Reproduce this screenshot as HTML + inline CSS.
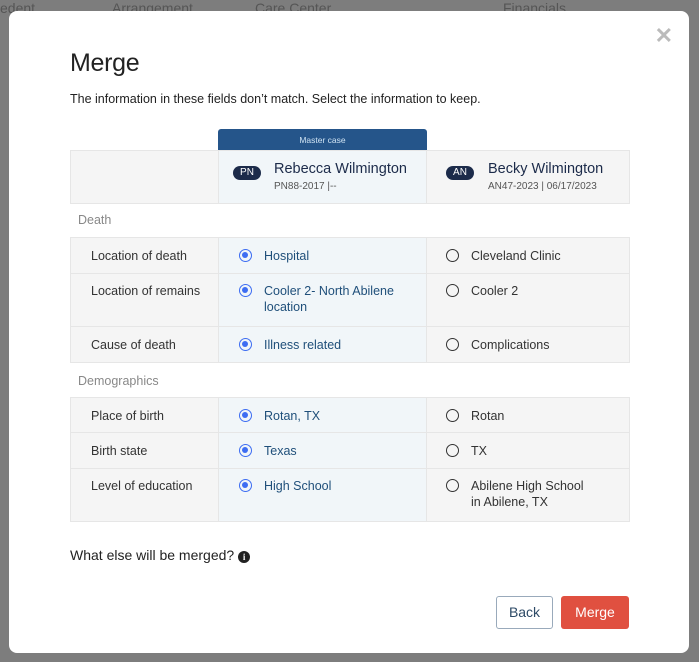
<!DOCTYPE html>
<html><head><style>
*{box-sizing:border-box}
body{margin:0;width:699px;height:662px;background:#7d7d7d;font-family:"Liberation Sans",sans-serif;position:relative;overflow:hidden;color:#333}
.bg{position:absolute;color:#555;font-size:14px}
.modal{position:absolute;left:9px;top:11px;width:680px;height:642px;background:#fff;border-radius:8px}
.a{position:absolute}
h1{position:absolute;left:61px;top:38px;margin:0;font-weight:normal;font-size:25px;color:#222;letter-spacing:-0.3px}
.row{position:absolute;left:61px;width:560px;background:#f5f5f5;border:1px solid #e6e6e6;border-top:none}
.row.f{border-top:1px solid #e6e6e6}
.c2{position:absolute;left:147px;width:209px;top:0;bottom:0;background:#f1f6f9;border-left:1px solid #e6e6e6;border-right:1px solid #e6e6e6}
.lbl{position:absolute;left:20px;font-size:12.5px;color:#333}
.opt{position:absolute;font-size:12.5px;line-height:16px}
.r{position:absolute;width:13px;height:13px;border:1.5px solid #333;border-radius:50%}
.r.on{border-color:#3d6df2}
.r.on:after{content:"";position:absolute;left:2px;top:2px;width:6px;height:6px;border-radius:50%;background:#3d6df2}
.sec{position:absolute;left:69px;font-size:12.5px;color:#888}
.pill{position:absolute;background:#1c2b4a;color:#fff;font-size:10px;border-radius:8px;width:28px;height:14px;line-height:14px;text-align:center}
</style></head><body>
<div class="bg" style="left:0;top:0">edent</div>
<div class="bg" style="left:112px;top:0">Arrangement</div>
<div class="bg" style="left:255px;top:0">Care Center</div>
<div class="bg" style="left:503px;top:0">Financials</div>
<div class="modal">
<div class="a" style="right:16px;top:12px;font-size:22px;color:#bbb;font-weight:bold">✕</div>
<h1>Merge</h1>
<div class="a" style="left:61px;top:81px;font-size:12.5px;color:#222">The information in these fields don’t match. Select the information to keep.</div>
<div class="a" style="left:209px;top:118px;width:209px;height:21px;background:#25558a;border-radius:3px 3px 0 0;color:#cfe3f3;font-size:8.5px;text-align:center;line-height:22px">Master case</div>
<div class="row f" style="top:139px;height:54px"><div class="c2"></div>
<div class="pill" style="left:162px;top:15px">PN</div>
<div class="a" style="left:203px;top:10px;font-size:14.5px;color:#1c2b4a">Rebecca Wilmington</div>
<div class="a" style="left:203px;top:30px;font-size:10px;color:#555">PN88-2017 |--</div>
<div class="pill" style="left:375px;top:15px">AN</div>
<div class="a" style="left:417px;top:10px;font-size:14.5px;color:#1c2b4a">Becky Wilmington</div>
<div class="a" style="left:417px;top:30px;font-size:10px;color:#555">AN47-2023 | 06/17/2023</div>
</div>
<div class="sec" style="top:202px">Death</div>
<div class="row f" style="top:226px;height:37px"><div class="c2"></div><div class="lbl" style="top:11px">Location of death</div>
<div class="r on" style="left:168px;top:11px"></div><div class="opt" style="left:193px;top:10px;color:#1f4f7a">Hospital</div>
<div class="r" style="left:375px;top:11px"></div><div class="opt" style="left:400px;top:10px">Cleveland Clinic</div></div>
<div class="row" style="top:263px;height:53px"><div class="c2"></div><div class="lbl" style="top:10px">Location of remains</div>
<div class="r on" style="left:168px;top:10px"></div><div class="opt" style="left:193px;top:9px;color:#1f4f7a">Cooler 2- North Abilene<br>location</div>
<div class="r" style="left:375px;top:10px"></div><div class="opt" style="left:400px;top:9px">Cooler 2</div></div>
<div class="row" style="top:316px;height:36px"><div class="c2"></div><div class="lbl" style="top:11px">Cause of death</div>
<div class="r on" style="left:168px;top:11px"></div><div class="opt" style="left:193px;top:10px;color:#1f4f7a">Illness related</div>
<div class="r" style="left:375px;top:11px"></div><div class="opt" style="left:400px;top:10px">Complications</div></div>
<div class="sec" style="top:363px">Demographics</div>
<div class="row f" style="top:386px;height:36px"><div class="c2"></div><div class="lbl" style="top:11px">Place of birth</div>
<div class="r on" style="left:168px;top:11px"></div><div class="opt" style="left:193px;top:10px;color:#1f4f7a">Rotan, TX</div>
<div class="r" style="left:375px;top:11px"></div><div class="opt" style="left:400px;top:10px">Rotan</div></div>
<div class="row" style="top:422px;height:36px"><div class="c2"></div><div class="lbl" style="top:11px">Birth state</div>
<div class="r on" style="left:168px;top:11px"></div><div class="opt" style="left:193px;top:10px;color:#1f4f7a">Texas</div>
<div class="r" style="left:375px;top:11px"></div><div class="opt" style="left:400px;top:10px">TX</div></div>
<div class="row" style="top:458px;height:53px"><div class="c2"></div><div class="lbl" style="top:10px">Level of education</div>
<div class="r on" style="left:168px;top:10px"></div><div class="opt" style="left:193px;top:9px;color:#1f4f7a">High School</div>
<div class="r" style="left:375px;top:10px"></div><div class="opt" style="left:400px;top:9px">Abilene High School<br>in Abilene, TX</div></div>
<div class="a" style="left:61px;top:536px;font-size:14px;color:#222">What else will be merged? <span style="display:inline-block;width:12px;height:12px;border-radius:50%;background:#222;color:#fff;font-size:9px;font-weight:bold;text-align:center;line-height:12px;font-family:'Liberation Serif',serif">i</span></div>
<div class="a" style="left:487px;top:585px;width:57px;height:33px;border:1px solid #9ab;border-radius:3px;color:#2d4a66;font-size:14px;text-align:center;line-height:31px">Back</div>
<div class="a" style="left:552px;top:585px;width:68px;height:33px;background:#e05040;border-radius:3px;color:#fff;font-size:14px;text-align:center;line-height:33px">Merge</div>
</div>
</body></html>
